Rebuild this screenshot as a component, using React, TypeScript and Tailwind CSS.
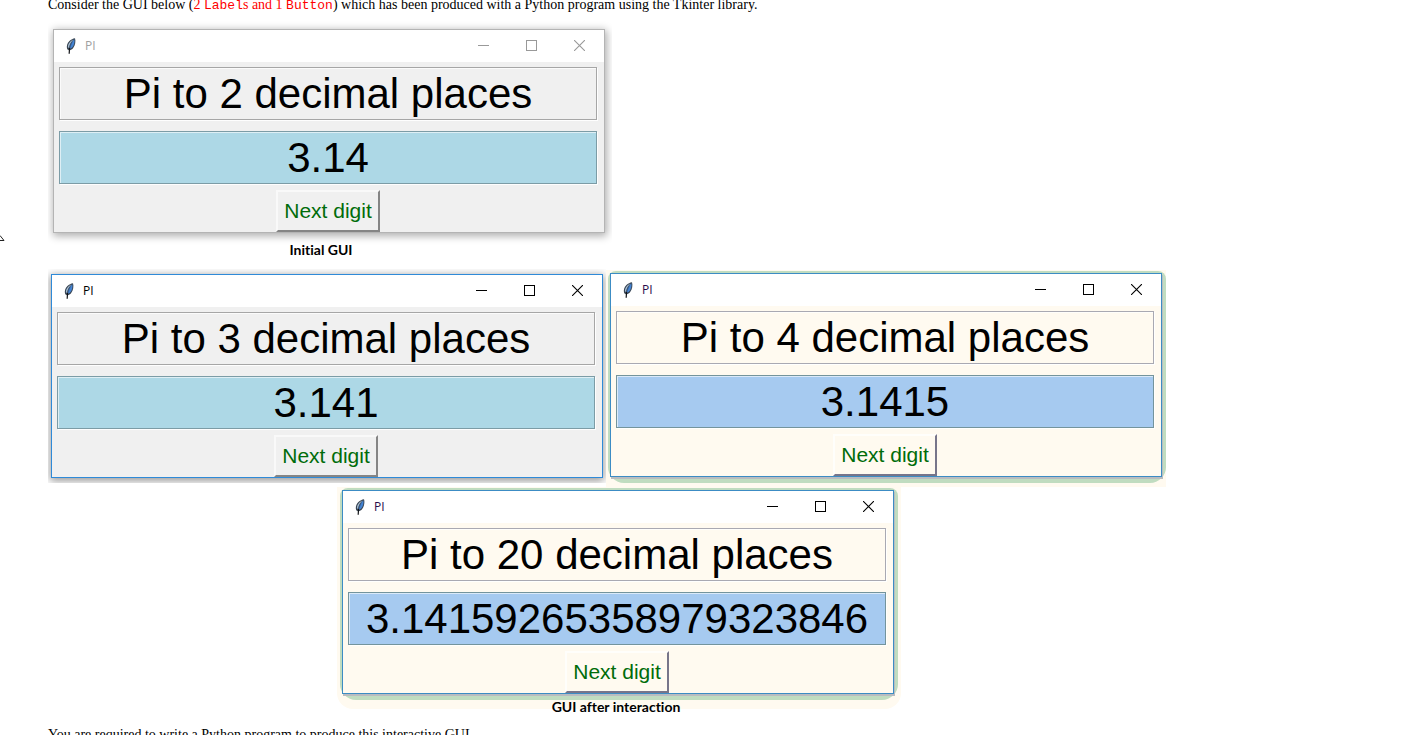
import React from "react";

type Theme = "inactive" | "active" | "selected";

interface PiWindowProps {
  title: string;
  value: string;
  theme: Theme;
}

const frameStyles: Record<Theme, string> = {
  inactive: "border-[#b4b4b4] bg-[#f0f0f0] shadow-[1px_2px_8px_1px_rgba(0,0,0,0.32)]",
  active: "border-[#2f8ad8] bg-[#f0f0f0] shadow-[0_2px_8px_1px_rgba(0,0,0,0.4)]",
  selected: "border-[#3c8cc4] bg-[#fffaf0] shadow-[1px_2px_0_0_#b9bcc0]",
};

const titleStyles: Record<Theme, string> = {
  inactive: "text-[#a0a0a0]",
  active: "text-black",
  selected: "text-[#2a0a4a]",
};

const controlStyles: Record<Theme, string> = {
  inactive: "text-[#999999]",
  active: "text-black",
  selected: "text-black",
};

const headingStyles: Record<Theme, string> = {
  inactive: "border-[#a6a6a6]",
  active: "border-[#a6a6a6]",
  selected: "border-[#a9a9b2]",
};

const valueStyles: Record<Theme, string> = {
  inactive: "border-[#7c9ca6] bg-[#add8e6]",
  active: "border-[#7c9ca6] bg-[#add8e6]",
  selected: "border-[#74949c] bg-[#a6caf0]",
};

const buttonStyles: Record<Theme, string> = {
  inactive: "border-t-[#f9f9f9] border-l-[#f9f9f9] border-r-[#858585] border-b-[#858585]",
  active: "border-t-[#f9f9f9] border-l-[#f9f9f9] border-r-[#858585] border-b-[#858585]",
  selected: "border-t-[#fffefb] border-l-[#fffefb] border-r-[#77758a] border-b-[#77758a]",
};

function Feather() {
  return (
    <svg width="10" height="16" viewBox="0 0 10 16" aria-hidden="true">
      <path d="M9 0.3 C9.9 3 9.3 7.4 7.2 10 C6.2 11.3 5 12.2 3.4 12.4 L1.2 11.2 C0.2 8.5 1.2 5.2 3.4 3.1 C5 1.5 7 0.5 9 0.3 Z" fill="#3a4654" />
      <path d="M8.3 1.2 C8.9 4 8 7.6 6 9.6 L3.8 11 C3.8 7.6 5.4 3.8 8.3 1.2 Z" fill="#4484d4" />
      <path d="M7.4 1.6 C4.6 2.9 2 5.8 2 9 L3 10.2 C3.2 7 4.8 4 7.4 1.6 Z" fill="#a9c0d6" />
      <path d="M6.2 4.2 C4.8 6.6 3.8 9.6 3.5 12" fill="none" stroke="#2a4a78" strokeWidth="0.6" />
      <path d="M3.5 10 L3.2 15.8" fill="none" stroke="#101216" strokeWidth="1.2" />
    </svg>
  );
}

function WindowControls({ theme }: { theme: Theme }) {
  return (
    <div className={`ml-auto flex h-full pr-px pb-px ${controlStyles[theme]}`}>
      <button type="button" aria-label="Minimize" className="flex w-12 items-center justify-center">
        <svg width="11" height="11" viewBox="0 0 11 11" aria-hidden="true">
          <path d="M0 5.5 H11" stroke="currentColor" />
        </svg>
      </button>
      <button type="button" aria-label="Maximize" className="flex w-12 items-center justify-center">
        <svg width="11" height="11" viewBox="0 0 11 11" aria-hidden="true">
          <rect x="0.5" y="0.5" width="10" height="10" fill="none" stroke="currentColor" />
        </svg>
      </button>
      <button type="button" aria-label="Close" className="flex w-12 items-center justify-center">
        <svg width="11" height="11" viewBox="0 0 11 11" aria-hidden="true">
          <path d="M0 0 L11 11 M11 0 L0 11" stroke="currentColor" strokeWidth="1.1" />
        </svg>
      </button>
    </div>
  );
}

function PiWindow({ title, value, theme }: PiWindowProps) {
  return (
    <section className={`w-[552px] border font-['Liberation_Sans',Arial,sans-serif] text-black ${frameStyles[theme]}`}>
      <header className="flex h-8 items-center bg-white pl-3">
        <Feather />
        <span className={`ml-[9px] font-['Open_Sans',sans-serif] text-[12px] leading-4 ${titleStyles[theme]}`}>PI</span>
        <WindowControls theme={theme} />
      </header>
      <div className="flex flex-col items-center pt-[5px] pr-[7px] pl-[5px]">
        <div className={`flex h-[53px] w-full items-center justify-center border text-[42px] leading-none shadow-[inset_1px_1px_0_rgba(255,255,255,0.7),1px_1px_0_rgba(255,255,255,0.9)] ${headingStyles[theme]}`}>
          {title}
        </div>
        <div className={`mt-[11px] flex h-[53px] w-full items-center justify-center border text-[42px] leading-none shadow-[inset_1px_1px_0_rgba(255,255,255,0.6),1px_1px_0_rgba(255,255,255,0.9)] ${valueStyles[theme]}`}>
          {value}
        </div>
        <button type="button" className={`mt-[6px] h-[42px] w-[104px] border-2 pb-[2px] text-[21px] leading-none whitespace-nowrap text-[#006c0a] ${buttonStyles[theme]}`}>
          Next digit
        </button>
      </div>
    </section>
  );
}

function Halo({ children }: { children: React.ReactNode }) {
  return (
    <div className="w-fit rounded-t-lg rounded-b-2xl bg-[#c0dcc0] pt-[2px] pr-1 pb-[6px] pl-[2px]">{children}</div>
  );
}

const captionClass =
  "text-center font-['Lato',sans-serif] text-[14px] leading-[14px] font-bold text-black [font-variant-ligatures:none]";

export default function App() {
  return (
    <main className="relative h-screen overflow-hidden bg-white pl-12 font-['Liberation_Serif','Times_New_Roman',serif] text-[14px] text-black">
      <svg className="absolute top-[234px] left-0" width="5" height="8" viewBox="0 0 5 8" aria-hidden="true">
        <path d="M0 1.5 L4 6.5 H0" fill="none" stroke="#222" />
      </svg>

      <p className="-mt-1 h-[25px] leading-[18px]">
        Consider the GUI below (
        <span className="text-[#ff0000]">
          2 <code className="font-['Liberation_Mono',monospace] text-[13px]">Label</code>s and 1{" "}
          <code className="font-['Liberation_Mono',monospace] text-[13px]">Button</code>
        </span>
        ) which has been produced with a Python program using the Tkinter library.
      </p>

      <figure className="w-fit overflow-hidden pt-2 pr-[7px] pl-[5px]">
        <PiWindow title="Pi to 2 decimal places" value="3.14" theme="inactive" />
        <figcaption className={`mt-[10px] h-[26px] pr-4 ${captionClass}`}>Initial GUI</figcaption>
      </figure>

      <div className="flex items-start">
        <div className="overflow-hidden px-[3px] py-[5px]">
          <PiWindow title="Pi to 3 decimal places" value="3.141" theme="active" />
        </div>
        <div className="mt-px bg-[#fffaf0] pt-px pb-1 pl-[2px]">
          <Halo>
            <PiWindow title="Pi to 4 decimal places" value="3.1415" theme="selected" />
          </Halo>
        </div>
      </div>

      <figure className="w-fit pl-[289px]">
        <div className="rounded-b-2xl bg-[#fffaf0] px-[3px] pt-px pb-[9px]">
          <Halo>
            <PiWindow title="Pi to 20 decimal places" value="3.14159265358979323846" theme="selected" />
          </Halo>
        </div>
        <figcaption className={`relative -mt-[9px] pr-[6px] ${captionClass}`}>GUI after interaction</figcaption>
      </figure>

      <p className="mt-3 leading-[18px]">
        You are required to write a Python program to produce this interactive GUI.
      </p>
    </main>
  );
}
